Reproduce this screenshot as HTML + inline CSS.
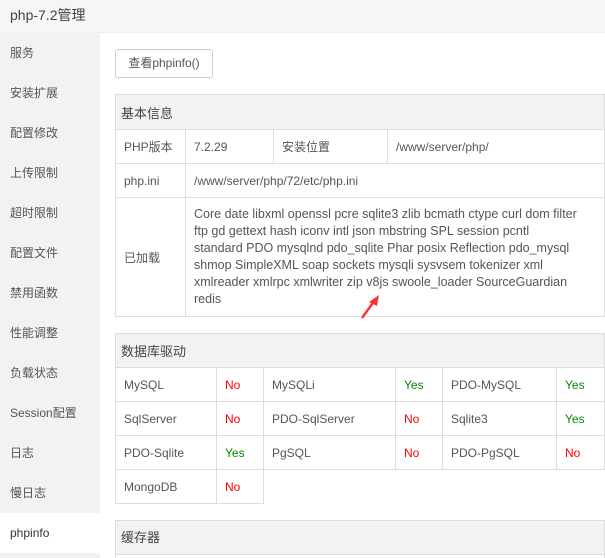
<!DOCTYPE html>
<html><head><meta charset="utf-8"><style>
*{margin:0;padding:0;box-sizing:border-box}
html,body{width:605px;height:558px;overflow:hidden}
body{background:#fff;font-family:"Liberation Sans","Noto Sans CJK SC",sans-serif;color:#555;position:relative}
.hd{position:absolute;left:0;top:0;width:605px;height:33px;background:#f6f6f6;font-size:14px;line-height:30px;padding-left:10px;color:#444;border-bottom:1px solid #eee}
.sb{position:absolute;left:0;top:33px;width:100px;height:525px;background:#f2f2f2}
.sb div{height:40px;line-height:40px;padding-left:10px;font-size:12px;color:#555}
.sb .on{background:#fff;color:#333}
.btn{position:absolute;left:115px;top:49px;width:98px;height:29px;border:1px solid #ccc;border-radius:3px;font-size:12px;line-height:27px;text-align:center;color:#555;background:#fff}
table{position:absolute;border-collapse:collapse;font-size:12px;color:#555}
td{border:1px solid #ddd;padding:0 8px;vertical-align:middle;white-space:nowrap}
th{background:#f2f2f2;border:1px solid #ddd;text-align:left;font-weight:normal;font-size:13px;padding:0 5px;color:#444}
.r{color:#f00}.g{color:#080}
.ld{font-size:12.5px;line-height:17px}
</style></head><body>
<div class="hd">php-7.2管理</div>
<div class="sb">
<div>服务</div><div>安装扩展</div><div>配置修改</div><div>上传限制</div><div>超时限制</div><div>配置文件</div><div>禁用函数</div><div>性能调整</div><div>负载状态</div><div>Session配置</div><div>日志</div><div>慢日志</div><div class="on">phpinfo</div>
</div>
<div class="btn">查看phpinfo()</div>
<table style="left:115px;top:94px;width:490px">
<tr style="height:35px"><th colspan="4">基本信息</th></tr>
<tr style="height:34px"><td style="width:70px">PHP版本</td><td style="width:88px">7.2.29</td><td style="width:114px">安装位置</td><td>/www/server/php/</td></tr>
<tr style="height:34px"><td>php.ini</td><td colspan="3">/www/server/php/72/etc/php.ini</td></tr>
<tr style="height:119px"><td>已加载</td><td colspan="3" class="ld">Core date libxml openssl pcre sqlite3 zlib bcmath ctype curl dom filter<br>ftp gd gettext hash iconv intl json mbstring SPL session pcntl<br>standard PDO mysqlnd pdo_sqlite Phar posix Reflection pdo_mysql<br>shmop SimpleXML soap sockets mysqli sysvsem tokenizer xml<br>xmlreader xmlrpc xmlwriter zip v8js swoole_loader SourceGuardian<br>redis</td></tr>
</table>
<table style="left:115px;top:333px;width:490px">
<tr style="height:34px"><th colspan="6">数据库驱动</th></tr>
<tr style="height:34px"><td style="width:101px">MySQL</td><td style="width:47px" class="r">No</td><td style="width:132px">MySQLi</td><td style="width:47px" class="g">Yes</td><td style="width:114px">PDO-MySQL</td><td class="g">Yes</td></tr>
<tr style="height:34px"><td>SqlServer</td><td class="r">No</td><td>PDO-SqlServer</td><td class="r">No</td><td>Sqlite3</td><td class="g">Yes</td></tr>
<tr style="height:34px"><td>PDO-Sqlite</td><td class="g">Yes</td><td>PgSQL</td><td class="r">No</td><td>PDO-PgSQL</td><td class="r">No</td></tr>
<tr style="height:34px"><td>MongoDB</td><td class="r">No</td><td style="border:none;border-left:1px solid #ddd"></td><td style="border:none"></td><td style="border:none"></td><td style="border:none"></td></tr>
</table>
<div style="position:absolute;left:115px;top:520px;width:490px;height:35px;background:#f2f2f2;border:1px solid #ddd;font-size:13px;color:#444;line-height:33px;padding-left:5px">缓存器</div>
<div style="position:absolute;left:115px;top:554px;width:490px;height:10px;border-left:1px solid #ddd;border-right:1px solid #ddd"></div>
<svg style="position:absolute;left:355px;top:292px" width="28" height="30"><line x1="7" y1="26" x2="20" y2="8" stroke="#f33" stroke-width="2.5"/><polygon points="24,3 14,10 22,14" fill="#f33"/></svg>
</body></html>
